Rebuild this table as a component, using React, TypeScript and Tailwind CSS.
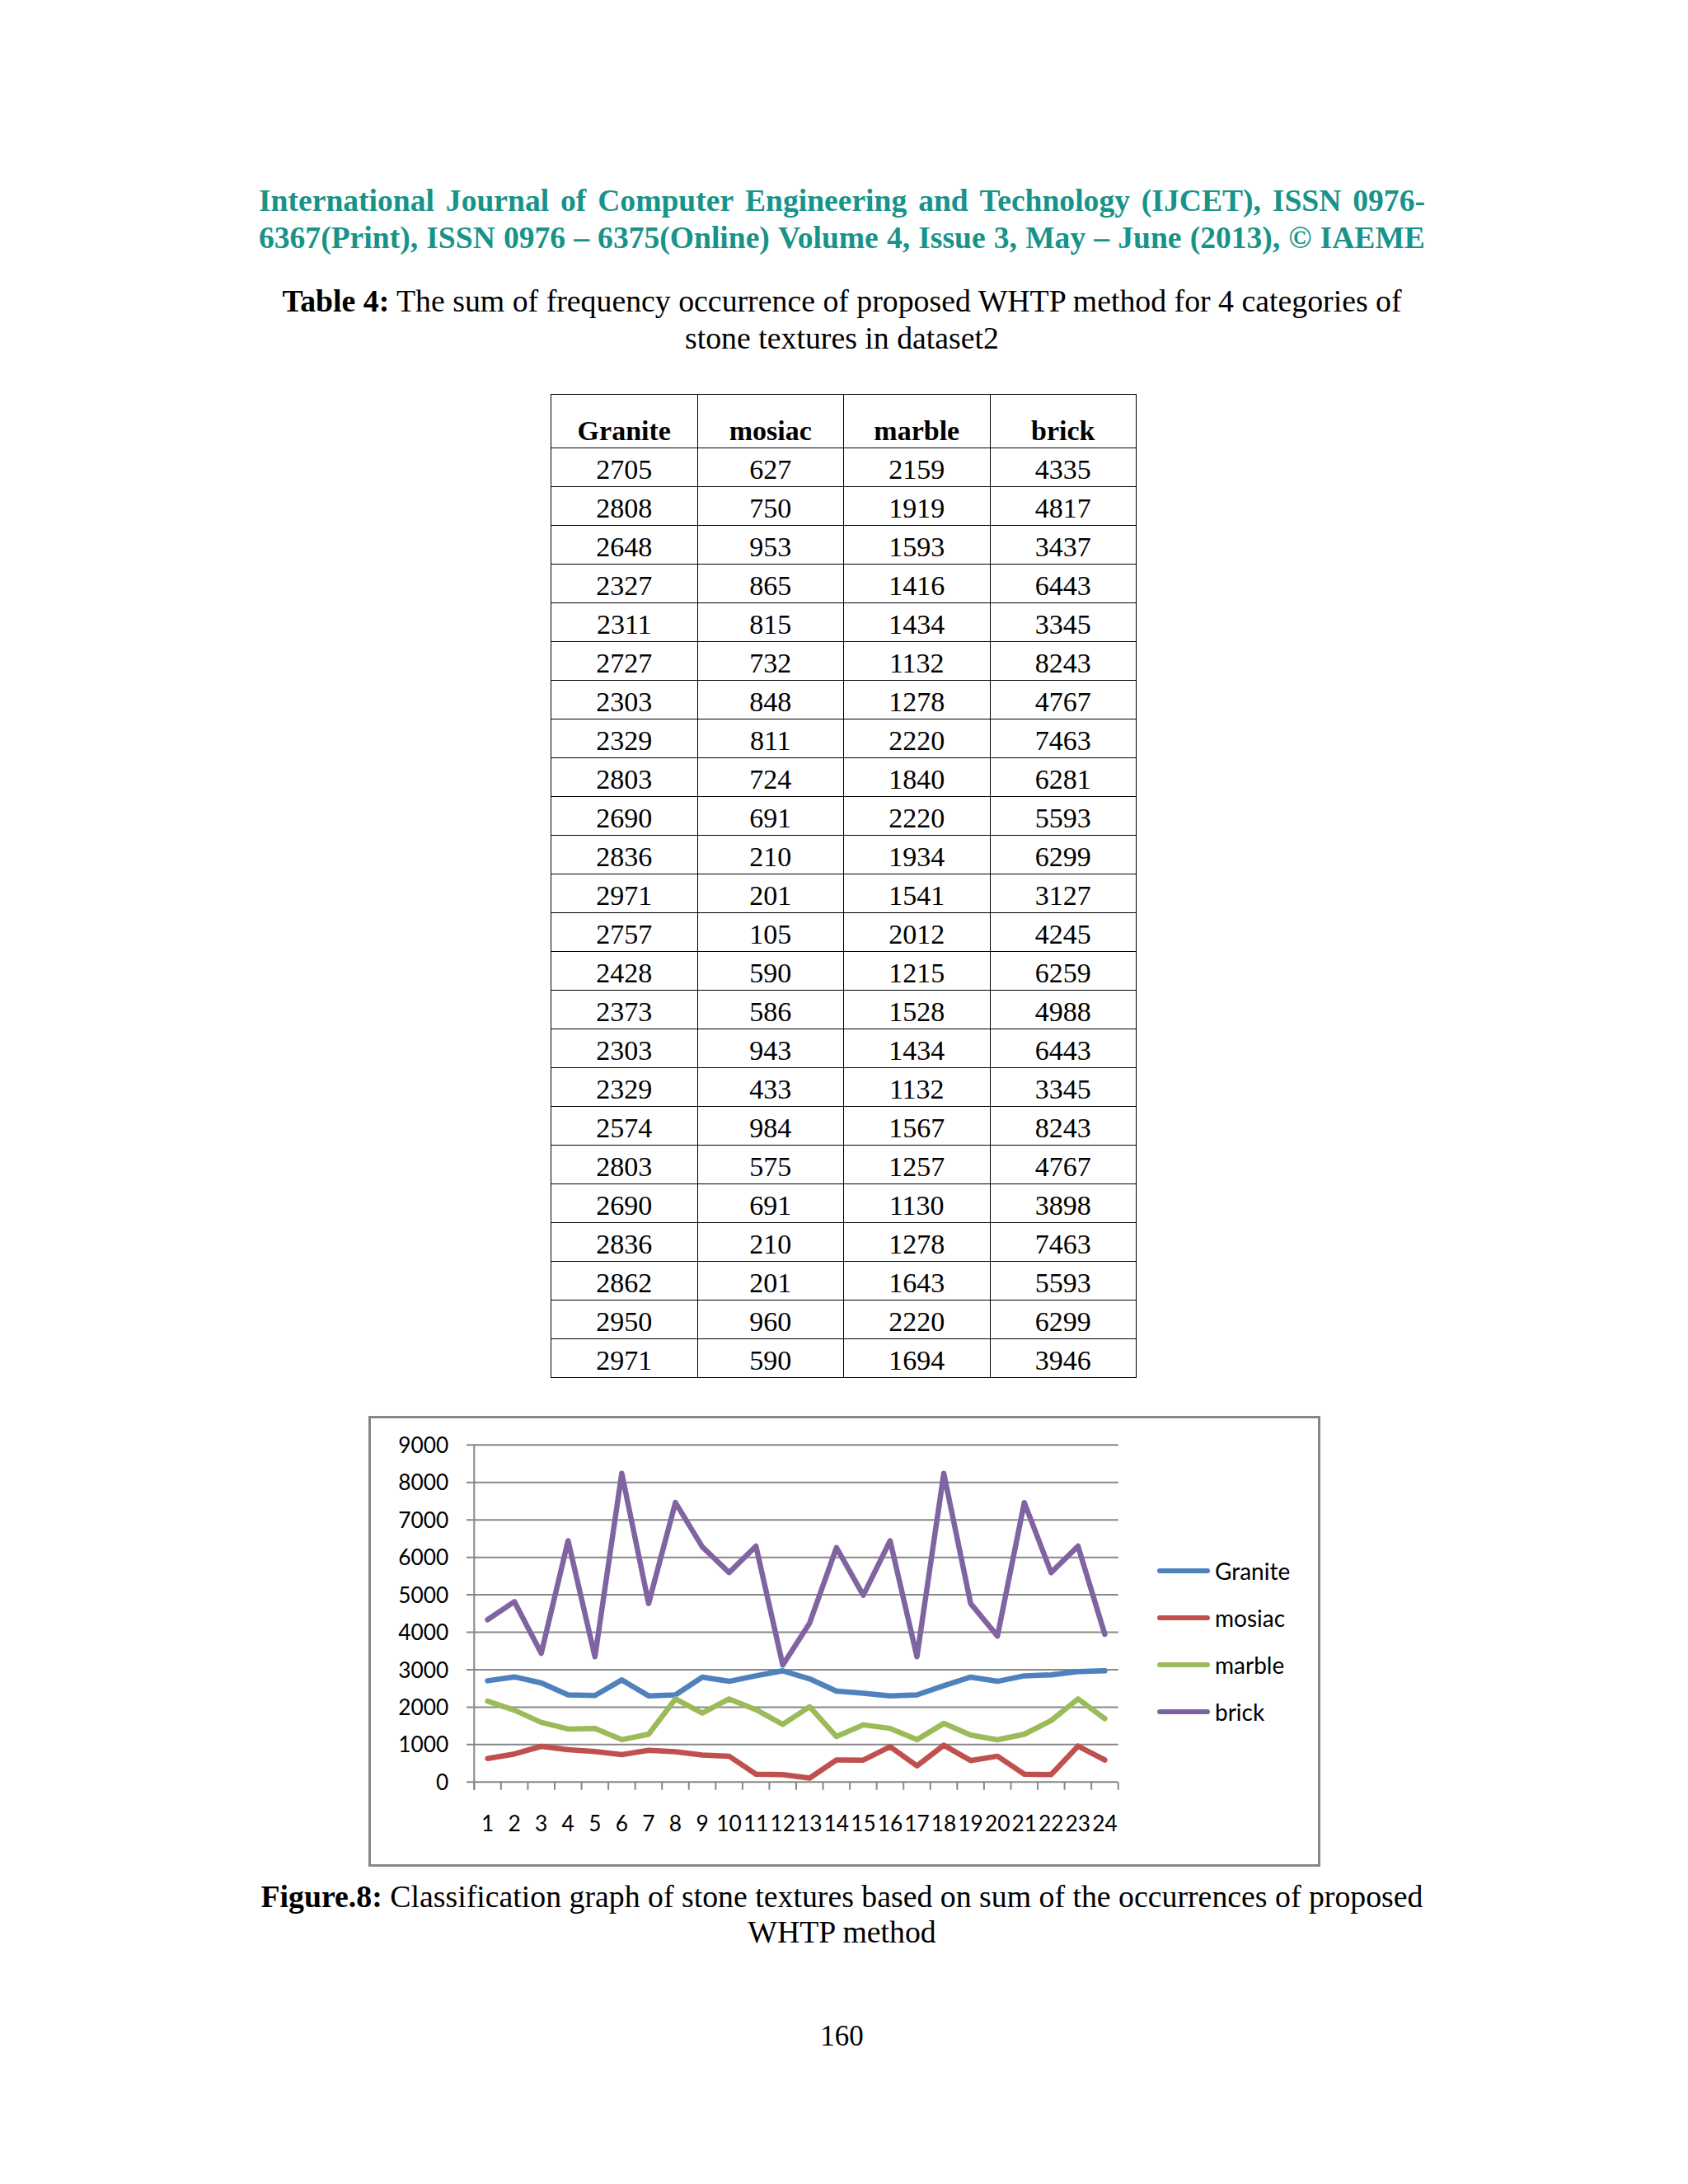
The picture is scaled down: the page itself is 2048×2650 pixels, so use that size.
import React from "react";

const granite = [2705, 2808, 2648, 2327, 2311, 2727, 2303, 2329, 2803, 2690, 2836, 2971, 2757, 2428, 2373, 2303, 2329, 2574, 2803, 2690, 2836, 2862, 2950, 2971];
const mosiac = [627, 750, 953, 865, 815, 732, 848, 811, 724, 691, 210, 201, 105, 590, 586, 943, 433, 984, 575, 691, 210, 201, 960, 590];
const marble = [2159, 1919, 1593, 1416, 1434, 1132, 1278, 2220, 1840, 2220, 1934, 1541, 2012, 1215, 1528, 1434, 1132, 1567, 1257, 1130, 1278, 1643, 2220, 1694];
const brick = [4335, 4817, 3437, 6443, 3345, 8243, 4767, 7463, 6281, 5593, 6299, 3127, 4245, 6259, 4988, 6443, 3345, 8243, 4767, 3898, 7463, 5593, 6299, 3946];

const series = [
  { name: "Granite", color: "#4F81BD", data: granite },
  { name: "mosiac", color: "#C0504D", data: mosiac },
  { name: "marble", color: "#9BBB59", data: marble },
  { name: "brick", color: "#8064A2", data: brick },
];

const line1 = ["International", "Journal", "of", "Computer", "Engineering", "and", "Technology", "(IJCET),", "ISSN", "0976-"];
const line2 = ["6367(Print),", "ISSN", "0976", "–", "6375(Online)", "Volume", "4,", "Issue", "3,", "May", "–", "June", "(2013),", "©", "IAEME"];

const AX = 125.3;
const PR = 906.7;
const Y0 = 441.3;
const PER = 0.04544;
const CW = (PR - AX) / 24;
const yv = (v: number) => Y0 - v * PER;
const xc = (i: number) => AX + (i + 0.5) * CW;

function Chart() {
  const grid = [0, 1000, 2000, 3000, 4000, 5000, 6000, 7000, 8000, 9000];
  return (
    <svg width={940} height={541} viewBox="0 0 940 541" className="block shrink-0">
      {grid.map((g) => (
        <g key={g}>
          <line x1={AX - 9.3} x2={PR} y1={yv(g)} y2={yv(g)} stroke="#878787" strokeWidth={2} />
          <text x={94.3} y={yv(g) + 9.6} textAnchor="end" fontFamily="Lato, sans-serif" fontSize={26.3} fill="#000">
            {g}
          </text>
        </g>
      ))}
      <line x1={AX} x2={AX} y1={yv(9000)} y2={Y0 + 9.4} stroke="#878787" strokeWidth={2} />
      {Array.from({ length: 25 }).map((_, i) => (
        <line key={i} x1={AX + i * CW} x2={AX + i * CW} y1={Y0} y2={Y0 + 9.4} stroke="#878787" strokeWidth={2} />
      ))}
      {Array.from({ length: 24 }).map((_, i) => (
        <text key={i} x={xc(i)} y={500.7} textAnchor="middle" fontFamily="Lato, sans-serif" fontSize={26.3} fill="#000">
          {i + 1}
        </text>
      ))}
      {series.map((s) => (
        <polyline
          key={s.name}
          points={s.data.map((v, i) => `${xc(i).toFixed(2)},${yv(v).toFixed(2)}`).join(" ")}
          fill="none"
          stroke={s.color}
          strokeWidth={6.5}
          strokeLinejoin="round"
          strokeLinecap="round"
        />
      ))}
    </svg>
  );
}

export default function App() {
  return (
    <div className="w-[2048px] h-[2650px] bg-white text-black font-['Liberation_Serif','Times_New_Roman',serif]">
      <div className="ml-[314px] w-[1415px] pt-[221px]">
        <div className="text-[#17938a] font-bold text-[37.6px] leading-[45px]">
          <div className="flex justify-between whitespace-nowrap">
            {line1.map((w, i) => (
              <span key={i}>{w}</span>
            ))}
          </div>
          <div className="flex justify-between whitespace-nowrap">
            {line2.map((w, i) => (
              <span key={i}>{w}</span>
            ))}
          </div>
        </div>

        <div className="mt-[32px] text-center text-[37.8px] leading-[45px]">
          <div>
            <span className="font-bold">Table 4:</span> The sum of frequency occurrence of proposed WHTP method for 4 categories of
          </div>
          <div>stone textures in dataset2</div>
        </div>

        <table className="mt-[45px] ml-[354px] w-[711px] table-fixed border-collapse text-[34px] text-center">
          <thead>
            <tr className="h-[65px]">
              {["Granite", "mosiac", "marble", "brick"].map((h) => (
                <th key={h} className="border border-black align-bottom font-bold leading-[38px] pb-[1px] p-0">
                  {h}
                </th>
              ))}
            </tr>
          </thead>
          <tbody>
            {granite.map((_, i) => (
              <tr key={i} className="h-[47px]">
                {[granite[i], mosiac[i], marble[i], brick[i]].map((v, j) => (
                  <td key={j} className="border border-black align-bottom leading-[38px] p-0 pb-[1px]">
                    {v}
                  </td>
                ))}
              </tr>
            ))}
          </tbody>
        </table>

        <div className="mt-[46px] ml-[133px] w-[1155px] h-[547px] border-[3px] border-[#878787] flex">
          <Chart />
          <div className="flex flex-col justify-center font-['Lato',sans-serif] text-[28px]">
            {series.map((s) => (
              <div key={s.name} className="h-[57px] flex items-center">
                <span className="ml-[14px] w-[64px] h-[6px] rounded-full" style={{ backgroundColor: s.color }} />
                <span className="ml-[6px] leading-none">{s.name}</span>
              </div>
            ))}
          </div>
        </div>

        <div className="mt-[15px] text-center text-[37.8px] leading-[43px]">
          <div>
            <span className="font-bold">Figure.8:</span> Classification graph of stone textures based on sum of the occurrences of proposed
          </div>
          <div>WHTP method</div>
        </div>

        <div className="mt-[82px] text-center text-[35px] leading-[45px]">160</div>
      </div>
    </div>
  );
}
